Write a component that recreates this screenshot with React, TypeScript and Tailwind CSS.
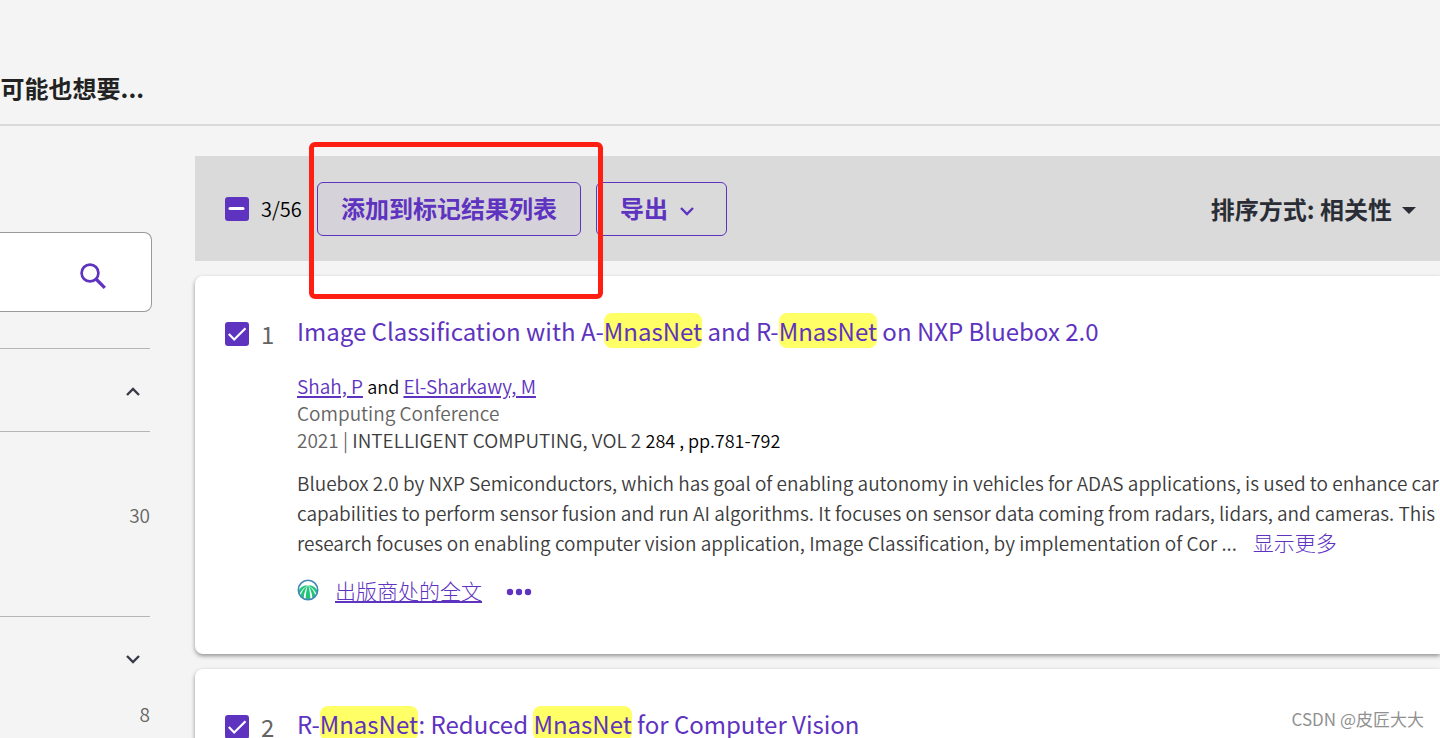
import React from "react";

const ChevronDown = ({ className }: { className: string }) => (
  <svg viewBox="0 0 14 10" className={className} fill="none" stroke="currentColor" strokeWidth="2.4" aria-hidden="true">
    <path d="M1 2 L7 8 L13 2" />
  </svg>
);

const ChevronUp = ({ className }: { className: string }) => (
  <svg viewBox="0 0 14 10" className={className} fill="none" stroke="currentColor" strokeWidth="2.4" aria-hidden="true">
    <path d="M1 8 L7 2 L13 8" />
  </svg>
);

function Tick({ label, partial = false }: { label: string; partial?: boolean }) {
  return (
    <span className="grid size-6 shrink-0">
      <input
        type="checkbox"
        defaultChecked
        aria-label={label}
        className="col-start-1 row-start-1 size-6 appearance-none rounded-[3px] bg-[#5e33bf]"
      />
      <svg viewBox="0 0 24 24" className="pointer-events-none col-start-1 row-start-1 size-6" fill="none" stroke="#fff" aria-hidden="true">
        {partial ? (
          <path d="M5 11.5 H18" strokeWidth="3" strokeLinecap="round" />
        ) : (
          <path d="M3.8 12 L9.2 17.5 L20.5 6.3" strokeWidth="2.2" />
        )}
      </svg>
    </span>
  );
}

const Hit = () => <mark className="rounded-lg bg-[#ffff66] text-[#5e33bf]">MnasNet</mark>;

function PublisherLogo() {
  return (
    <svg viewBox="0 0 22 22" className="size-[22px]" aria-hidden="true">
      <circle cx="11" cy="11" r="9.7" fill="#fff" />
      <g fill="#20c47a">
        <path d="M10.5 6.5 C6 6 3 8.5 1.5 12 L2.5 15 C4.5 11 7.5 8 10.5 6.5Z" />
        <path d="M10.6 6.6 C7.5 9 4.6 12.5 3.6 16.6 L6.6 19.4 C7 14 8.6 10 10.6 6.6Z" />
        <path d="M10.6 6.5 C9.6 10 8.8 15 8.6 20.5 H13.4 C13.2 15 12.4 10 11.4 6.5Z" />
        <path d="M11.4 6.6 C14.5 9 17.4 12.5 18.4 16.6 L15.4 19.4 C15 14 13.4 10 11.4 6.6Z" />
        <path d="M11.5 6.5 C16 6 19 8.5 20.5 12 L19.5 15 C17.5 11 14.5 8 11.5 6.5Z" />
      </g>
      <circle cx="11" cy="11" r="9.7" fill="none" stroke="#4387b5" strokeWidth="1.6" />
    </svg>
  );
}

function Card({ index, title, children }: { index: number; title: React.ReactNode; children?: React.ReactNode }) {
  return (
    <article className="flex rounded-l-lg bg-white pt-[37px] pb-12 pl-[30px] shadow-[0_2px_4px_rgba(0,0,0,0.4)]">
      <div className="flex h-[42px] w-[72px] shrink-0 items-center gap-3">
        <Tick label={`选择 ${index}`} />
        <span className="text-2xl text-[#646464]">{index}</span>
      </div>
      <div className="min-w-0 flex-1 whitespace-nowrap">
        <h3 className="text-2xl leading-9">
          <a href="#record" className="text-[#5e33bf]">{title}</a>
        </h3>
        {children}
      </div>
    </article>
  );
}

export default function App() {
  return (
    <div className="relative h-screen overflow-hidden bg-[#f4f4f4] font-['Noto_Sans_CJK_SC',sans-serif] text-[19px] text-black">
      <header className="flex h-[126px] items-center border-b-2 border-[#d9d9d9] pt-[52px]">
        <h2 className="flex w-36 justify-end text-2xl font-bold whitespace-nowrap text-[#222]">您可能也想要...</h2>
      </header>

      <div className="flex">
        <aside className="w-[152px] shrink-0 pt-[106px] font-[350] text-[#646464]">
          <div className="flex h-[80px] items-center rounded-r-lg border border-l-0 border-[#999] bg-white">
            <input type="search" aria-label="检索" className="h-full w-20 min-w-0 outline-none" />
            <button type="button" aria-label="搜索" className="pt-2 text-[#5e33bf]">
              <svg viewBox="0 0 26 26" className="size-[26px]" fill="none" stroke="currentColor" aria-hidden="true">
                <circle cx="10" cy="10" r="8.4" strokeWidth="2.7" />
                <path d="M16 16 L24.8 24.8" strokeWidth="3.2" />
              </svg>
            </button>
          </div>
          <div className="mt-9 mr-0.5 border-t border-[#b5b5b5]">
            <button type="button" aria-label="收起" className="flex h-[82px] w-full items-center justify-end pt-1 pr-2.5 text-[#383a48]">
              <ChevronUp className="h-[10px] w-[14px]" />
            </button>
            <div className="flex h-[185px] items-center justify-end border-t border-[#b5b5b5] pb-[18px]">30</div>
            <button type="button" aria-label="展开" className="flex h-[84px] w-full items-center justify-end border-t border-[#b5b5b5] pr-2.5 text-[#383a48]">
              <ChevronDown className="h-[10px] w-[14px]" />
            </button>
            <div className="flex justify-end">8</div>
          </div>
        </aside>

        <main className="ml-[43px] flex min-w-0 flex-1 flex-col gap-[15px] pt-[30px]">
          <div className="flex h-[105px] items-center bg-[#dadada] pr-6 pl-[30px]">
            <Tick label="全选" partial />
            <span className="ml-3 w-14 text-xl font-[350]">3/56</span>
            <div className="relative">
              <button type="button" className="h-[54px] rounded-md border border-[#5e33bf] bg-[#d5d2d9] px-[23px] pb-0.5 text-2xl font-bold whitespace-nowrap text-[#5e33bf]">
                添加到标记结果列表
              </button>
              <div className="pointer-events-none absolute -top-10 -right-[22px] -bottom-[63px] -left-2 z-10 rounded-md border-[5px] border-[#ff1e12]" />
            </div>
            <button type="button" className="ml-[15px] flex h-[54px] items-center gap-3 rounded-md border border-[#5e33bf] pr-8 pl-[23px] text-2xl font-bold whitespace-nowrap text-[#5e33bf]">
              <span className="pb-0.5">导出</span>
              <ChevronDown className="mt-1 h-[10px] w-[14px]" />
            </button>
            <button type="button" className="ml-auto flex items-center gap-2.5 text-2xl font-bold whitespace-nowrap text-[#2a2d35]">
              排序方式: 相关性
              <svg viewBox="0 0 14 7" className="mt-1 h-[7px] w-[14px]" fill="currentColor" aria-hidden="true">
                <path d="M0 0 H14 L7 7Z" />
              </svg>
            </button>
          </div>

          <Card index={1} title={<>Image Classification with A-<Hit /> and R-<Hit /> on NXP Bluebox 2.0</>}>
            <div className="mt-[23px] leading-[27px] font-[350] text-[#646464]">
              <p className="text-black">
                <a href="#author" className="text-[#5e33bf] underline decoration-2 underline-offset-2">Shah, P</a>{" "}
                <span className="text-lg leading-5">and</span>{" "}
                <a href="#author" className="text-[#5e33bf] underline decoration-2 underline-offset-2">El-Sharkawy, M</a>
              </p>
              <p>Computing Conference</p>
              <p>
                2021 | <span className="text-[#3c3c3c]">INTELLIGENT COMPUTING, VOL 2</span>{" "}
                <span className="text-lg leading-5 text-black">284 , pp.781-792</span>
              </p>
            </div>
            <p className="mt-[15px] leading-[30px] font-[350] text-[#3c3c3c]">
              Bluebox 2.0 by NXP Semiconductors, which has goal of enabling autonomy in vehicles for ADAS applications, is used to enhance car
              <br />
              capabilities to perform sensor fusion and run AI algorithms. It focuses on sensor data coming from radars, lidars, and cameras. This
              <br />
              research focuses on enabling computer vision application, Image Classification, by implementation of Cor ...
              <button type="button" className="ml-4 text-[21px] leading-6 font-light text-[#5e33bf]">显示更多</button>
            </p>
            <div className="mt-4 flex items-center text-[#5e33bf]">
              <PublisherLogo />
              <a href="#fulltext" className="ml-4 text-[21px] leading-8 font-light underline decoration-2 underline-offset-2">出版商处的全文</a>
              <button type="button" aria-label="更多" className="ml-6 pt-1">
                <svg viewBox="0 0 26 8" className="h-2 w-[26px]" fill="currentColor" aria-hidden="true">
                  <circle cx="4" cy="4" r="3.2" />
                  <circle cx="13" cy="4" r="3.2" />
                  <circle cx="22" cy="4" r="3.2" />
                </svg>
              </button>
            </div>
          </Card>

          <Card index={2} title={<>R-<Hit />: Reduced <Hit /> for Computer Vision</>} />
        </main>
      </div>

      <div className="absolute right-4 bottom-[7px] text-[17px] leading-6 text-[#919191]">CSDN @皮匠大大</div>
    </div>
  );
}
